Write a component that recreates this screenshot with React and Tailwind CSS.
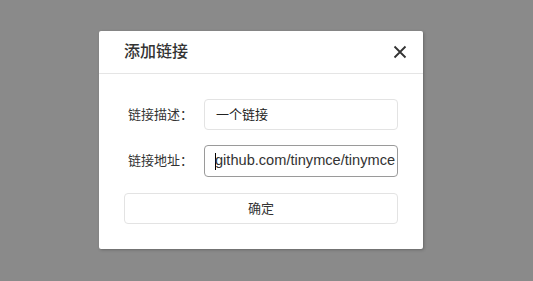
export default function App() {
  return (
    <div
      className="h-[281px] w-[533px] bg-[#8a8a8a] pl-[99px] pt-[31px]"
      style={{ fontFamily: '"Liberation Sans", "Noto Sans CJK SC", sans-serif' }}
    >
      <div className="w-[324px] rounded-[2px] bg-white shadow-[1px_1px_3px_rgba(0,0,0,0.25)]">
        <div className="flex h-[43px] items-center justify-between border-b border-[#e5e5e5] pl-[25px] pr-[16px]">
          <span className="text-[16px] font-medium text-[#333]">添加链接</span>
          <svg width="14" height="14" viewBox="0 0 14 14" className="text-[#333]">
            <path d="M1.5 1.5L12.5 12.5M12.5 1.5L1.5 12.5" stroke="currentColor" strokeWidth="1.8" />
          </svg>
        </div>
        <div className="flex flex-col px-[25px] pb-[25px] pt-[25px]">
          <div className="flex items-center">
            <label className="w-[80px] pr-[11px] text-right text-[13px] text-[#333]">链接描述：</label>
            <div className="flex h-[31px] flex-1 items-center rounded-[4px] border border-[#e3e3e3] pl-[11px] text-[13px] text-[#222]">
              一个链接
            </div>
          </div>
          <div className="mt-[15px] flex items-center">
            <label className="w-[80px] pr-[11px] text-right text-[13px] text-[#333]">链接地址：</label>
            <div className="flex h-[32px] flex-1 items-center overflow-hidden whitespace-nowrap rounded-[4px] border border-[#9a9a9a] pl-[10px] text-[14.6px] text-[#333]">
              <span className="mr-[-1px] h-[17px] w-px shrink-0 bg-[#000]" />
              github.com/tinymce/tinymce
            </div>
          </div>
          <button className="mt-[16px] h-[31px] w-full rounded-[4px] border border-[#e3e3e3] bg-white text-[13px] text-[#333]">
            确定
          </button>
        </div>
      </div>
    </div>
  );
}
